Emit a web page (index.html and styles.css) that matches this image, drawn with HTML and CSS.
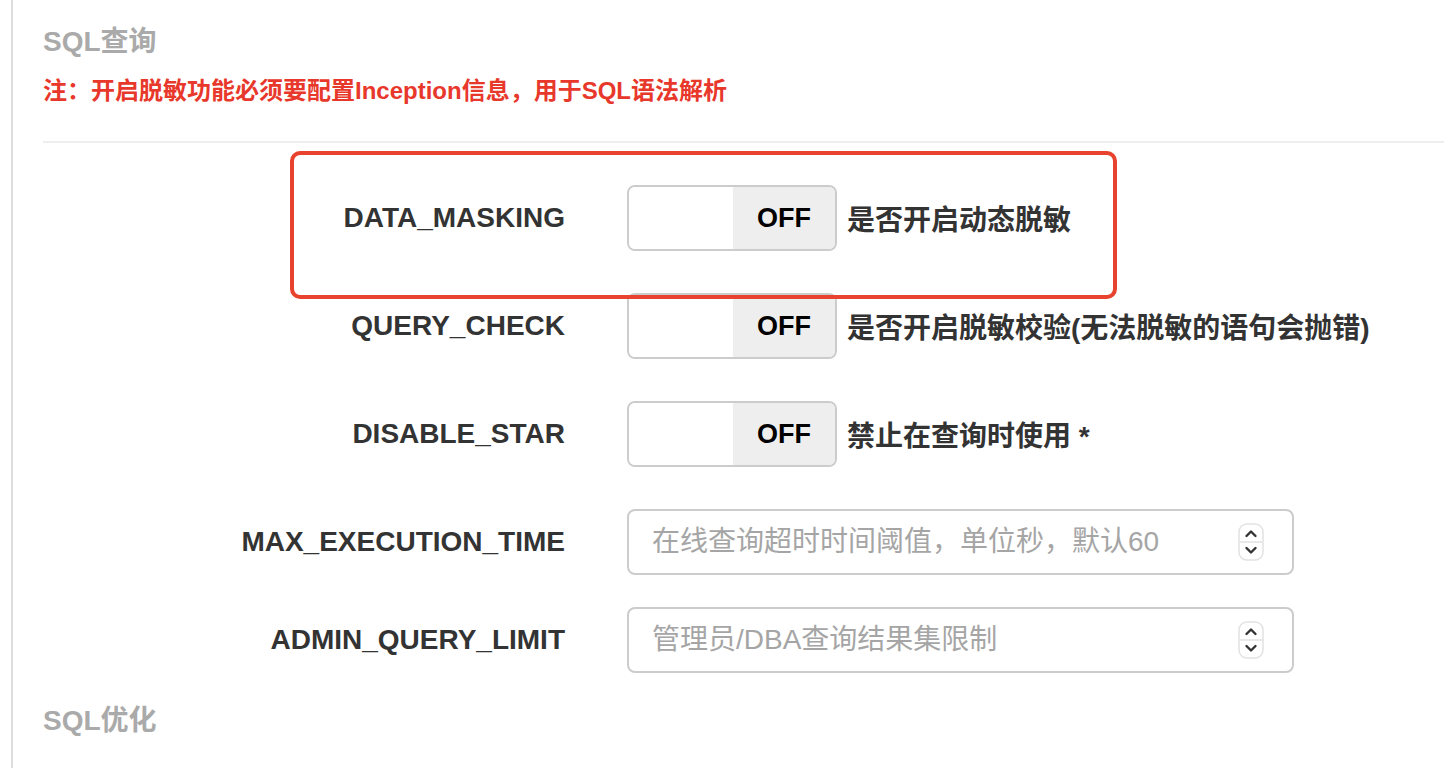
FILE: index.html
```html
<!DOCTYPE html>
<html lang="zh-CN">
<head>
  <meta charset="UTF-8" />
  <title>系统配置</title>
  <link rel="stylesheet" href="styles.css">
</head>
<body>
  <div class="page">
    <div class="config-panel">
      <h4 class="section-title">SQL查询</h4>
      <p class="note">注：开启脱敏功能必须要配置Inception信息，用于SQL语法解析</p>
      <hr class="divider" />

      <div class="form-row">
        <label class="row-label">DATA_MASKING</label>
        <div class="switch">
          <span class="switch-handle"></span>
          <span class="switch-off">OFF</span>
        </div>
        <span class="row-help">是否开启动态脱敏</span>
      </div>

      <div class="form-row">
        <label class="row-label">QUERY_CHECK</label>
        <div class="switch">
          <span class="switch-handle"></span>
          <span class="switch-off">OFF</span>
        </div>
        <span class="row-help">是否开启脱敏校验(无法脱敏的语句会抛错)</span>
      </div>

      <div class="form-row">
        <label class="row-label">DISABLE_STAR</label>
        <div class="switch">
          <span class="switch-handle"></span>
          <span class="switch-off">OFF</span>
        </div>
        <span class="row-help">禁止在查询时使用 *</span>
      </div>

      <div class="form-row input-row">
        <label class="row-label">MAX_EXECUTION_TIME</label>
        <div class="num-input">
          <input type="text" placeholder="在线查询超时时间阈值，单位秒，默认60" />
          <svg class="spinner" width="26" height="38" viewBox="0 0 26 38">
            <rect x="1" y="1" width="24" height="36" rx="8" fill="#fff" stroke="#e2e2e2" stroke-width="1.5"/>
            <line x1="2" y1="19" x2="24" y2="19" stroke="#e2e2e2" stroke-width="1.5"/>
            <path d="M8.5 13 L13 8.5 L17.5 13" stroke="#333" stroke-width="2.4" fill="none" stroke-linecap="round" stroke-linejoin="round"/>
            <path d="M8.5 25 L13 29.5 L17.5 25" stroke="#333" stroke-width="2.4" fill="none" stroke-linecap="round" stroke-linejoin="round"/>
          </svg>
        </div>
      </div>

      <div class="form-row input-row">
        <label class="row-label">ADMIN_QUERY_LIMIT</label>
        <div class="num-input">
          <input type="text" placeholder="管理员/DBA查询结果集限制" />
          <svg class="spinner" width="26" height="38" viewBox="0 0 26 38">
            <rect x="1" y="1" width="24" height="36" rx="8" fill="#fff" stroke="#e2e2e2" stroke-width="1.5"/>
            <line x1="2" y1="19" x2="24" y2="19" stroke="#e2e2e2" stroke-width="1.5"/>
            <path d="M8.5 13 L13 8.5 L17.5 13" stroke="#333" stroke-width="2.4" fill="none" stroke-linecap="round" stroke-linejoin="round"/>
            <path d="M8.5 25 L13 29.5 L17.5 25" stroke="#333" stroke-width="2.4" fill="none" stroke-linecap="round" stroke-linejoin="round"/>
          </svg>
        </div>
      </div>

      <h4 class="section-title next-section">SQL优化</h4>

      <!-- 截图标注框 -->
      <div class="highlight-box"></div>
    </div>
  </div>
</body>
</html>
```

FILE: styles.css
```css
body {
  margin: 0;
  background: #fff;
  font-family: "Liberation Sans", "Noto Sans CJK SC", sans-serif;
  color: #333;
}
.page {
  padding-left: 11px;
  height: 768px;
  overflow: hidden;
}
.config-panel {
  position: relative;
  border-left: 2px solid #ddd;
  padding: 22px 0 0 30px;
  min-height: 768px;
  box-sizing: border-box;
}
.section-title {
  margin: 0;
  font-size: 28px;
  line-height: 40px;
  font-weight: 700;
  color: #aaa;
}
.note {
  margin: 12px 0 0 0;
  font-size: 24px;
  line-height: 34px;
  font-weight: 700;
  color: #e8382b;
}
.divider {
  margin: 33px 0 0 0;
  border: none;
  border-top: 2px solid #eee;
  height: 0;
}
.form-row {
  display: flex;
  align-items: center;
  height: 66px;
  margin-top: 42px;
}
.divider + .form-row {
  margin-top: 42px;
}
.input-row + .input-row {
  margin-top: 32px;
}
.row-label {
  width: 522px;
  flex-shrink: 0;
  text-align: right;
  font-size: 28px;
  font-weight: 700;
  color: #333;
  margin-right: 62px;
}
.switch {
  display: flex;
  width: 210px;
  height: 66px;
  box-sizing: border-box;
  border: 2px solid #ccc;
  border-radius: 8px;
  overflow: hidden;
  flex-shrink: 0;
}
.switch-handle {
  width: 104px;
  background: #fff;
}
.switch-off {
  flex: 1;
  background: #eee;
  color: #000;
  font-size: 27px;
  font-weight: 700;
  display: flex;
  align-items: center;
  justify-content: center;
}
.row-help {
  margin-left: 10px;
  font-size: 28px;
  font-weight: 700;
  color: #333;
  white-space: nowrap;
}
.num-input {
  display: flex;
  align-items: center;
  width: 667px;
  height: 66px;
  box-sizing: border-box;
  border: 2px solid #ccc;
  border-radius: 8px;
  padding: 0 28px 0 23px;
  flex-shrink: 0;
}
.num-input input {
  flex: 1;
  min-width: 0;
  border: none;
  outline: none;
  padding: 0;
  font-family: "Liberation Sans", "Noto Sans CJK SC", sans-serif;
  font-size: 28px;
  color: #333;
  background: transparent;
}
.num-input input::placeholder {
  color: #a5a5a5;
}
.spinner {
  flex-shrink: 0;
  margin-left: 10px;
}
.next-section {
  margin-top: 28px;
}
.highlight-box {
  position: absolute;
  left: 277px;
  top: 151px;
  width: 827px;
  height: 148px;
  box-sizing: border-box;
  border: 4px solid #e8432e;
  border-radius: 10px;
  pointer-events: none;
}
```
